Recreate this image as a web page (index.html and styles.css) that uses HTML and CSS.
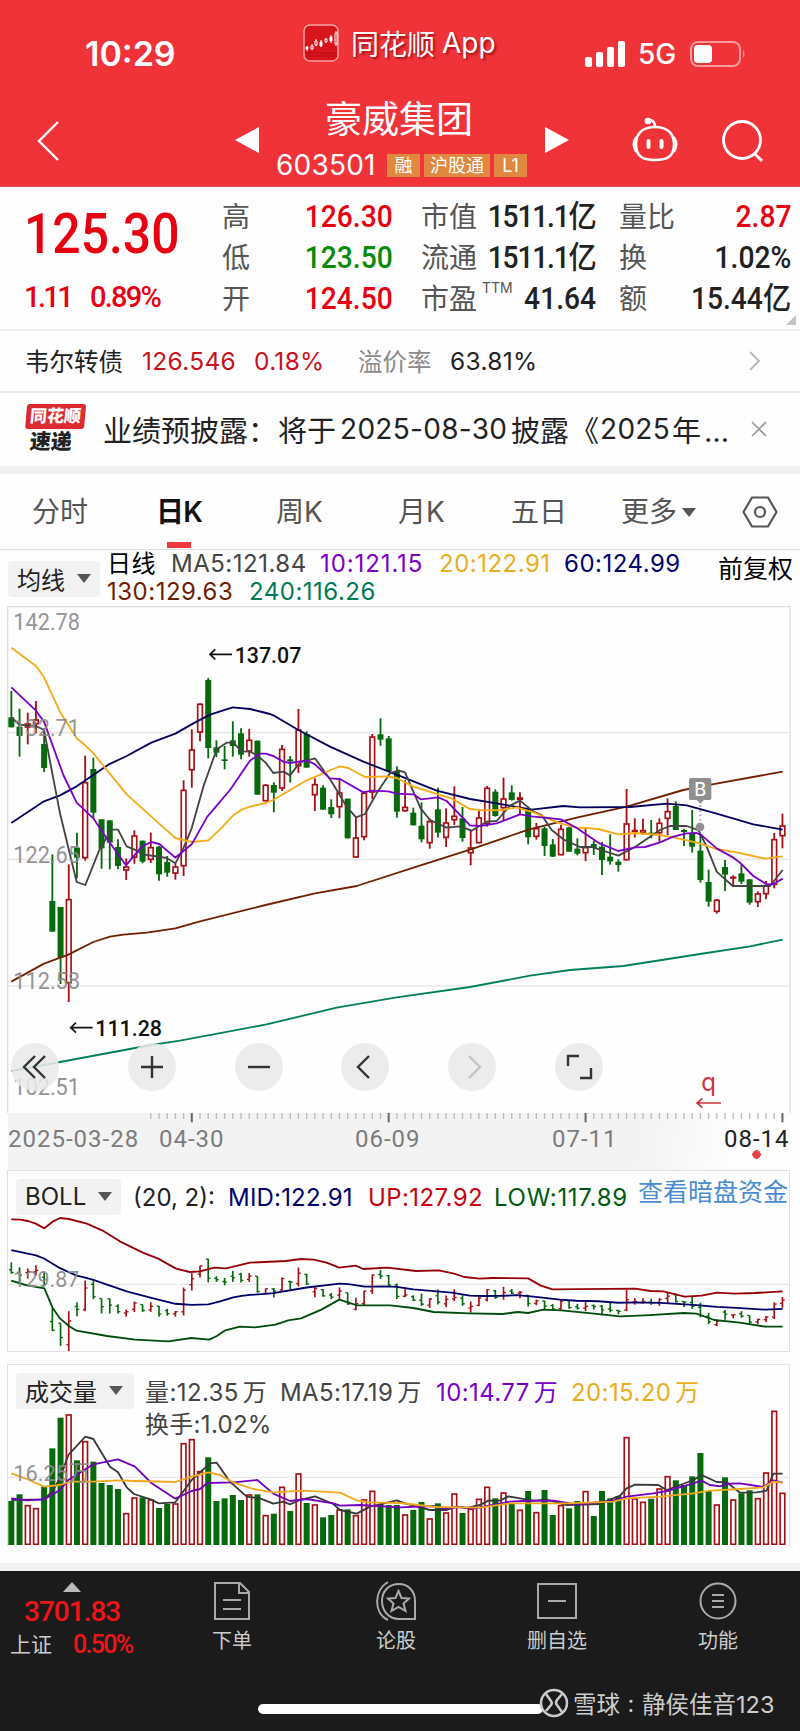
FILE: index.html
```html
<!DOCTYPE html>
<html lang="zh-CN">
<head>
    <meta charset="UTF-8">
    <meta name="viewport" content="width=device-width, initial-scale=1.0">
    <title>豪威集团 603501</title>
    <link rel="stylesheet" href="styles.css">
</head>
<body>
    <header class="header">
        <div class="status-bar">
            <span class="time">10:29</span>
            <div class="app-name">
                <svg class="app-icon" viewBox="0 0 36 38">
                    <rect x="1" y="1" width="34" height="36" rx="6" fill="#d8151c" stroke="#f9a0a0" stroke-width="1.5"/>
                    <path d="M2 29h32M2 32h32" stroke="#b90d14"/>
                    <g fill="#fff" stroke="#fff">
                        <path d="M4 22v5M9 20v6M13 15v7M18 16v7M23 14v5M28 11v8M33 7v15"/>
                        <path d="M3 23h2v2H3zM17 18h2v4h-2zM27 13h2v4h-2z"/>
                        <path d="M8 22h2v3H8zM12 17h2v4h-2zM22 15h2v3h-2zM32 9h2v11h-2z" fill="#d8151c"/>
                    </g>
                </svg>
                <span class="app-cn">同花顺</span><span class="app-en">App</span>
            </div>
            <div class="signal">
                <i class="bar b1"></i><i class="bar b2"></i><i class="bar b3"></i><i class="bar b4"></i>
            </div>
            <span class="network">5G</span>
            <svg class="battery" viewBox="0 0 56 26">
                <rect x="1" y="1" width="49" height="24" rx="7" fill="none" stroke="#f99a9d" stroke-width="2"/>
                <rect x="4" y="4" width="18" height="18" rx="4" fill="#fff"/>
                <path d="M53 9q3 4 0 8z" fill="#f99a9d"/>
            </svg>
        </div>
        <div class="title-bar">
            <svg class="back" viewBox="0 0 24 42"><path d="M22 2 3 21l19 19" fill="none" stroke="#fff" stroke-width="2.4"/></svg>
            <svg class="prev" viewBox="0 0 24 26"><path d="M24 0v26L0 13z" fill="#fff"/></svg>
            <div class="stock">
                <h1 class="stock-name">豪威集团</h1>
                <div class="stock-info">
                    <span class="stock-code">603501</span>
                    <span class="tag">融</span>
                    <span class="tag wide">沪股通</span>
                    <span class="tag">L1</span>
                </div>
            </div>
            <svg class="next" viewBox="0 0 24 26"><path d="M0 0v26l24-13z" fill="#fff"/></svg>
            <svg class="robot" viewBox="0 0 48 46" fill="none" stroke="#fff" stroke-width="2.6" stroke-linecap="round">
                <path d="M24 10q0-7-6-7h-3"/>
                <circle cx="17" cy="4" r="2" fill="#fff"/>
                <path d="M24 10c-12 0-19 6-19 17 0 12 6 16 19 16s19-4 19-16c0-11-7-17-19-17z"/>
                <path d="M5 21q-4 6 0 13M43 21q4 6 0 13" stroke-width="3"/>
                <path d="M17.500 24v6M30.500 24v6" stroke-width="4"/>
            </svg>
            <svg class="search" viewBox="0 0 42 42" fill="none" stroke="#fff" stroke-width="2.8">
                <circle cx="20" cy="20" r="18.500"/><path d="m32 33 8 8"/>
            </svg>
        </div>
    </header>

    <section class="quote">
        <div class="price-box">
            <div class="price">125.30</div>
            <div class="change"><span>1.11</span><span>0.89%</span></div>
        </div>
        <dl class="stats col-a">
            <dt>高</dt><dd class="up">126.30</dd>
            <dt>低</dt><dd class="down">123.50</dd>
            <dt>开</dt><dd class="up">124.50</dd>
        </dl>
        <dl class="stats col-b">
            <dt>市值</dt><dd class="tight">1511.1亿</dd>
            <dt>流通</dt><dd class="tight">1511.1亿</dd>
            <dt>市盈<sup>TTM</sup></dt><dd>41.64</dd>
        </dl>
        <dl class="stats col-c">
            <dt>量比</dt><dd class="up">2.87</dd>
            <dt>换</dt><dd>1.02%</dd>
            <dt>额</dt><dd>15.44亿</dd>
        </dl>
        <i class="corner"></i>
    </section>

    <section class="bond">
        <span class="bond-name">韦尔转债</span>
        <span class="bond-price">126.546</span>
        <span class="bond-rate">0.18%</span>
        <span class="bond-label">溢价率</span>
        <span class="bond-premium">63.81%</span>
        <svg class="bond-arrow" viewBox="0 0 12 20"><path d="m1 1 9 9-9 9" fill="none" stroke="#bbb" stroke-width="2"/></svg>
    </section>

    <section class="news">
        <div class="news-logo">
            <span class="logo-top">同花顺</span>
            <span class="logo-bottom">速递</span>
        </div>
        <p class="news-text"><span class="n0">业绩预披露：</span><span class="n1">将于</span><span class="n2">2025-08-30</span><span class="n3">披露</span><span class="n4">《</span><span class="n5">2025</span><span class="n6">年…</span></p>
        <svg class="close" viewBox="0 0 16 16"><path d="m1 1 14 14M15 1 1 15" stroke="#999" stroke-width="1.600"/></svg>
    </section>

    <nav class="tabs">
        <span class="tab">分时</span>
        <span class="tab active">日K</span>
        <span class="tab">周K</span>
        <span class="tab">月K</span>
        <span class="tab">五日</span>
        <span class="tab">更多<i class="caret"></i></span>
        <svg class="settings" viewBox="0 0 36 32" fill="none" stroke="#555" stroke-width="2.200"><path d="M10 1.500h16L34.500 16 26 30.500H10L1.500 16z"/><circle cx="18" cy="16" r="5"/></svg>
    </nav>

    <section class="ma-row">
        <span class="select">均线<i class="caret"></i></span>
        <div class="ma-values">
            <div class="ma-line">
                <span class="w1">日线</span><span class="w2">MA5:121.84</span><span class="w3 purple">10:121.15</span><span class="w4 yellow">20:122.91</span><span class="w5 navy">60:124.99</span>
            </div>
            <div class="ma-line">
                <span class="w6 brown">130:129.63</span><span class="teal">240:116.26</span>
            </div>
        </div>
        <span class="adjust">前复权</span>
    </section>

    <section class="chart">
        <svg id="kline" viewBox="0 18 2400 1521"></svg>
        <div class="controls">
            <button class="round"><svg viewBox="0 0 48 48"><path d="M24 13 13 24l11 11M34 13 23 24l11 11"/></svg></button>
            <button class="round"><svg viewBox="0 0 48 48"><path d="M24 13v22M13 24h22"/></svg></button>
            <button class="round"><svg viewBox="0 0 48 48"><path d="M13 24h22"/></svg></button>
            <button class="round"><svg viewBox="0 0 48 48"><path d="M28 13 17 24l11 11"/></svg></button>
            <button class="round disabled"><svg viewBox="0 0 48 48"><path d="m21 13 11 11-11 11"/></svg></button>
            <button class="round"><svg viewBox="0 0 48 48"><path d="M13 23V13h11M25 35h11V25"/></svg></button>
        </div>
    </section>

    <section class="axis">
        <svg id="ticks" viewBox="0 0 2400 36"></svg>
        <div class="dates">
            <span>2025-03-28</span><span>04-30</span><span>06-09</span><span>07-11</span><span class="last">08-14</span>
        </div>
    </section>

    <section class="panel boll">
        <div class="panel-head">
            <span class="select">BOLL<i class="caret"></i></span>
            <span class="p1">(20, 2):</span><span class="p2 navy">MID:122.91</span><span class="p3 red">UP:127.92</span><span class="p4 green">LOW:117.89</span><a class="link">查看暗盘资金</a>
        </div>
        <svg id="boll" viewBox="24 357 2346 411"></svg>
    </section>

    <section class="panel volume">
        <div class="panel-head">
            <span class="select">成交量<i class="caret"></i></span>
            <span class="v1">量:12.35<b>万</b></span><span class="v2">MA5:17.19<b>万</b></span><span class="v3 purple">10:14.77<b>万</b></span><span class="v4 yellow">20:15.20<b>万</b></span>
        </div>
        <div class="turnover">换手:1.02%</div>
        <svg id="volume" viewBox="24 165 2346 405"></svg>
    </section>

    <footer class="footer">
        <div class="index">
            <i class="tri"></i>
            <div class="index-value">3701.83</div>
            <div class="index-row"><span>上证</span><span class="index-rate">0.50%</span></div>
        </div>
        <div class="menu m1">
            <svg viewBox="0 0 42 40"><path d="M4 2h25l9 9v27H4zM28 2v10h10M12 19h18M12 28h18"/></svg>
            <span>下单</span>
        </div>
        <div class="menu m2">
            <svg viewBox="0 0 42 40"><path d="M24 3c-10 0-17 7-17 17s7 18 17 18h16V20C40 10 33 3 24 3zM13 1C-1 9-2 32 13 39"/><path d="m23.500 10 3 7 7.500.500-5.500 5 2 7.500-7-4-7 4 2-7.500-5.500-5 7.500-.5z"/></svg>
            <span>论股</span>
        </div>
        <div class="menu m3">
            <svg viewBox="0 0 42 40"><path d="M2 3h38v34H2zM12 20h18"/></svg>
            <span>删自选</span>
        </div>
        <div class="menu m4">
            <svg viewBox="0 0 42 40"><circle cx="21" cy="20" r="17.500"/><path d="M15 14h12M15 20h12M15 26h12"/></svg>
            <span>功能</span>
        </div>
        <div class="home-bar"></div>
        <div class="watermark">
            <svg viewBox="0 0 30 30" fill="none" stroke="#ccc" stroke-width="2.500"><circle cx="15" cy="15" r="13"/><path d="M7 6l5 7q1.500 2 0 4l-5 6M23 6l-5 6q-2 3 0 5l5 7"/></svg>
            <span>雪球</span><span class="colon">:</span><span>静侯佳音123</span>
        </div>
    </footer>
    <script src="chart.js"></script>
</body>
</html>
```
FILE: styles.css
```css
:root {
    --red: #f03239;
    --up: #e60012;
    --down: #0a8a0a;
    --line: #e2e2e2;
    --purple: #7a00c8;
    --yellow: #e8ae20;
    --navy: #000070;
}

* {
    margin: 0;
    padding: 0;
    box-sizing: border-box;
}

body {
    width: 800px;
    font-family: Inter, "Noto Sans CJK SC", sans-serif;
    background: #fefefe;
    color: #222;
    overflow-x: hidden;
}

svg {
    display: block;
    flex: none;
}

span, dt, dd, p {
    white-space: nowrap;
    flex: none;
}

/* header */
.header {
    height: 187px;
    background: var(--red);
    color: #fff;
    border-bottom: 1px solid #d84a4e;
}

.status-bar {
    display: flex;
    align-items: center;
    height: 95px;
    padding: 12px 0 0 85px;
}

.time {
    width: 218px;
    font-size: 34px;
    font-weight: 600;
}

.app-name {
    display: flex;
    align-items: center;
    width: 282px;
    margin-top: -22px;
    text-shadow: 2px 2px 2px rgba(120, 0, 0, 0.6);
}

.app-icon {
    width: 36px;
    height: 38px;
}

.app-cn {
    margin-left: 12px;
    font-size: 28px;
}

.app-en {
    margin-left: 7px;
    font-size: 28px;
}

.signal {
    display: flex;
    align-items: flex-end;
    gap: 4px;
    width: 53px;
    height: 26px;
}

.bar {
    width: 7px;
    border-radius: 2px;
    background: #fff;
}

.b1 { height: 10px; }
.b2 { height: 15px; }
.b3 { height: 20px; }
.b4 { height: 26px; }

.network {
    width: 52px;
    font-size: 28px;
    font-weight: 500;
}

.battery {
    width: 56px;
    height: 26px;
}

.title-bar {
    display: flex;
    height: 91px;
    padding-left: 36px;
}

.back {
    width: 24px;
    height: 42px;
    margin-top: 25px;
}

.prev {
    width: 24px;
    height: 26px;
    margin: 32px 0 0 175px;
}

.stock {
    width: 268px;
    margin-left: 17px;
}

.stock-name {
    height: 53px;
    padding-left: 49px;
    font-size: 37px;
    font-weight: 400;
    line-height: 50px;
}

.stock-info {
    display: flex;
    align-items: center;
    gap: 4px;
    height: 34px;
}

.stock-code {
    width: 107px;
    font-size: 28px;
    letter-spacing: 0.2px;
}

.tag {
    width: 33px;
    height: 23px;
    background: #e0883f;
    font-size: 18px;
    line-height: 23px;
    text-align: center;
}

.tag.wide {
    width: 66px;
}

.next {
    width: 24px;
    height: 26px;
    margin: 32px 0 0 1px;
}

.robot {
    width: 48px;
    height: 46px;
    margin: 22px 0 0 62px;
}

.search {
    width: 42px;
    height: 42px;
    margin: 25px 0 0 43px;
}

/* quote */
.quote {
    position: relative;
    display: flex;
    height: 144px;
    padding: 9px 0 0 24px;
    border-bottom: 2px solid #f0f0f0;
}

.price-box {
    flex: none;
    width: 198px;
    font-family: Roboto, sans-serif;
    color: var(--up);
}

.price {
    width: 172px;
    height: 76px;
    font-size: 56px;
    font-weight: 500;
    line-height: 76px;
    transform: scaleX(0.89);
    transform-origin: left;
}

.change {
    display: flex;
    gap: 19px;
    font-size: 29px;
    font-weight: 500;
    line-height: 50px;
    letter-spacing: -1.8px;
}

.change span:first-child {
    letter-spacing: -2.6px;
}

.stats {
    display: grid;
    flex: none;
    grid-template-columns: 56px 1fr;
    grid-auto-rows: 41px;
    align-items: center;
}

.col-a { width: 171px; }
.col-b { width: 171px; margin-left: 28px; }
.col-c { width: 172px; margin-left: 27px; }

.stats dt {
    width: 56px;
    padding-top: 2px;
    font-size: 28px;
    color: #555;
    line-height: 41px;
}

.stats sup {
    display: inline-block;
    margin-left: 5px;
    font-size: 14px;
    line-height: 10px;
    vertical-align: 16px;
}

.stats dd {
    justify-self: end;
    font-family: Roboto, "Noto Sans CJK SC", sans-serif;
    font-size: 31px;
    font-weight: 500;
    transform: scaleX(0.91);
    transform-origin: right;
    line-height: 41px;
}

.stats .tight {
    letter-spacing: -1.3px;
}

.stats .up { color: var(--up); }
.stats .down { color: var(--down); }

.corner {
    position: absolute;
    right: 4px;
    bottom: 4px;
    border-left: 10px solid transparent;
    border-bottom: 10px solid #c4c4c4;
}

/* bond */
.bond {
    display: flex;
    align-items: center;
    height: 62px;
    padding: 0 0 1px 25px;
    border-bottom: 2px solid #e8e8e8;
    font-size: 24.5px;
}

.bond-name { width: 117px; }
.bond-price { width: 112px; color: #c8101c; letter-spacing: 0.3px; }
.bond-rate { width: 104px; color: #c8101c; letter-spacing: 0.3px; }
.bond-label { width: 92px; color: #8a8a8a; }
.bond-premium { width: 299px; letter-spacing: 0.3px; }

.bond-arrow {
    width: 12px;
    height: 20px;
}

/* news */
.news {
    display: flex;
    align-items: center;
    height: 73px;
    padding: 0 0 2px 25px;
}

.news-logo {
    width: 78px;
    font-weight: 900;
    transform: skewX(-5deg);
}

.logo-top {
    display: block;
    width: 59px;
    height: 25px;
    border-radius: 3px;
    background: #dd2a30;
    color: #fff;
    font-size: 17px;
    line-height: 25px;
    text-align: center;
}

.logo-bottom {
    display: block;
    padding-left: 6px;
    font-size: 21px;
    line-height: 25px;
}

.news-text {
    display: flex;
    align-items: center;
    width: 648px;
    font-size: 29px;
}

.n0 { width: 175px; }
.n1 { width: 62px; }
.n2 { width: 171px; font-size: 28px; letter-spacing: 0.3px; }
.n3 { width: 59px; }
.n4 { width: 30px; }
.n5 { width: 72px; font-size: 28px; letter-spacing: 0.3px; }
.n6 { letter-spacing: 3px; }

.close {
    width: 16px;
    height: 16px;
}

/* tabs */
.tabs {
    display: grid;
    grid-template-columns: 124px 120px 122px 113px 110px 121px 40px;
    align-items: center;
    height: 84px;
    padding-left: 32px;
    border-top: 8px solid #f2f2f2;
    border-bottom: 1px solid var(--line);
}

.tab {
    height: 75px;
    color: #555;
    font-size: 28px;
    line-height: 76px;
}

.tab.active {
    color: #111;
    font-weight: 600;
    letter-spacing: -0.8px;
    background: linear-gradient(#ee3a3c, #ee3a3c) no-repeat 11px 68px / 24px 6px;
}

.tab .caret {
    margin-left: 5px;
    vertical-align: 5px;
}

.caret {
    display: inline-block;
    border: 7px solid transparent;
    border-top: 9px solid #555;
    border-bottom: 0;
}

.settings {
    width: 36px;
    height: 32px;
}

/* moving averages */
.ma-row {
    display: flex;
    height: 56px;
    padding-left: 8px;
}

.select {
    display: flex;
    align-items: center;
    gap: 12px;
    height: 36px;
    padding: 0 0 2px 9px;
    border-radius: 4px;
    background: #f2f2f2;
    font-size: 24px;
}

.ma-row .select {
    width: 92px;
    margin-top: 11px;
}

.ma-values {
    flex: none;
    width: 618px;
    padding-left: 7px;
}

.ma-line {
    display: flex;
    font-size: 24px;
    line-height: 28px;
    letter-spacing: 0.5px;
}

.w1 { width: 64px; color: #000; }
.w2 { width: 149px; color: #444; }
.w3 { width: 119px; letter-spacing: 0.9px; }
.w4 { width: 125px; }
.w6 { width: 142px; }

.adjust {
    font-size: 25px;
    line-height: 38px;
    color: #000;
}

.purple { color: var(--purple); }
.yellow { color: var(--yellow); }
.navy { color: var(--navy); }
.brown { color: #6c1e00; }
.teal { color: #007a56; }
.red { color: #c8000e; }
.green { color: #005a10; }

/* k-line chart */
.chart {
    position: relative;
    height: 507px;
}

.chart svg {
    width: 100%;
}

.controls {
    position: absolute;
    left: 11px;
    top: 437px;
    display: flex;
    gap: 58.8px;
}

.round {
    width: 48px;
    height: 48px;
    border: 0;
    border-radius: 50%;
    background: rgba(233, 233, 233, 0.88);
}

.round:first-child {
    margin-right: 10px;
}

.round path {
    fill: none;
    stroke: #333;
    stroke-width: 2.4;
}

.round.disabled path {
    stroke: #c4c4c4;
}

/* date axis */
.axis {
    height: 57px;
    margin: 0 10px 0 8px;
    background: linear-gradient(100deg, #f3f3f3 80%, #fdfdfd 92%);
}

#ticks {
    width: 800px;
    height: 12px;
    margin-left: -8px;
}

.dates {
    display: grid;
    grid-template-columns: 151px 196px 197px 172px auto;
    font-family: Roboto, sans-serif;
    font-size: 24px;
    line-height: 29px;
    color: #7c7c7c;
    letter-spacing: 1px;
}

.dates .last {
    color: #222;
    background: radial-gradient(circle, #e8434a 4px, transparent 4.5px) no-repeat 27px 24px / 11px 11px;
    height: 45px;
}

/* indicator panels */
.panel {
    width: 783px;
    margin-left: 7px;
    border: 1px solid var(--line);
}

.panel svg {
    width: 782px;
}

.panel-head {
    display: flex;
    align-items: center;
    height: 36px;
    margin: 8px 0 0 8px;
    font-size: 24px;
}

.panel .caret {
    border-width: 9px 7px 0;
}

.boll {
    height: 182px;
    overflow: hidden;
}

.boll .select { width: 105px; }
.p1 { width: 95px; margin-left: 12px; }
.p2 { width: 140px; letter-spacing: 0.2px; }
.p3 { width: 126px; letter-spacing: 0.4px; }
.p4 { width: 144px; letter-spacing: 0.7px; }

.link {
    font-size: 25px;
    line-height: 30px;
    margin-top: -10px;
    color: #4a8cd0;
    white-space: nowrap;
}

.volume {
    height: 182px;
    margin-top: 12px;
    border-bottom: 0;
}

.volume .select { width: 118px; }
.volume b { font-weight: 400; margin-left: 4px; }
.v1 { width: 135px; margin-left: 11px; color: #444; }
.v2 { width: 156px; color: #444; }
.v3 { width: 135px; }

.v1, .v2, .v3, .v4 {
    padding-bottom: 2px;
    letter-spacing: 0.4px;
}

.turnover {
    height: 30px;
    padding-left: 137px;
    font-size: 24px;
    line-height: 31px;
    letter-spacing: 0.3px;
    color: #444;
}

#volume {
    margin-top: -29px;
}

/* footer */
.footer {
    position: relative;
    display: flex;
    height: 168px;
    margin-top: 17px;
    border-top: 8px solid #f2f2f2;
    background: #1b1b1b;
    color: #ccc;
}

.index {
    flex: none;
    width: 192px;
    padding: 11px 0 0 10px;
    font-family: Roboto, "Noto Sans CJK SC", sans-serif;
}

.tri {
    display: block;
    width: 18px;
    margin-left: 53px;
    border: 9px solid transparent;
    border-top: 0;
    border-bottom: 10px solid #bbb;
}

.index-value {
    padding-left: 14px;
    color: #f01418;
    font-size: 28px;
    font-weight: 500;
    line-height: 40px;
    letter-spacing: -1px;
}

.index-row {
    display: flex;
    gap: 21px;
    font-size: 21px;
    line-height: 26px;
}

.index-rate {
    color: #f01418;
    font-size: 25px;
    font-weight: 500;
    letter-spacing: -1.7px;
}

.menu {
    display: flex;
    flex: none;
    flex-direction: column;
    align-items: center;
    width: 80px;
    padding-top: 10px;
    font-size: 20px;
}

.menu svg {
    width: 42px;
    height: 40px;
    fill: none;
    stroke: #aaa;
    stroke-width: 2;
}

.menu span {
    margin-top: 6px;
    line-height: 28px;
}

.m2 { margin-left: 84px; }
.m3 { margin-left: 81px; }
.m4 { margin-left: 81px; }

.home-bar {
    position: absolute;
    left: 258px;
    top: 133px;
    width: 285px;
    height: 10px;
    border-radius: 5px;
    background: #fff;
}

.watermark {
    position: absolute;
    left: 539px;
    top: 115px;
    display: flex;
    align-items: center;
    height: 34px;
    font-size: 23.5px;
}

.watermark svg {
    width: 30px;
    height: 30px;
    margin-right: 4px;
}

.colon {
    width: 22px;
    text-align: center;
}
```
FILE: chart.js
```js
// all coordinates are in chart units, 3 units = 1px
var STEP = 24.61;
var X0 = 34;
var RED = '#a80f14';
var GREEN = '#066a0c';

// direction, high, body top, body bottom, low
var candles = `g 273 352 382 382,g 326 380 408 470,r 338 370 383 433,r 303 358 373 400,g 385 432 504 516
g 763 903 995 995,g 921 921 1073 1152,r 793 897 1150 1206,g 698 743 773 835,r 467 546 775 782
g 473 507 638 655,g 658 658 745 806,g 661 661 728 808,g 718 741 798 808,r 775 799 812 840
r 691 706 773 791,g 722 722 785 790,r 698 741 780 789,g 737 740 823 842,g 768 786 818 830
r 790 799 821 839,r 541 569 799 828,r 388 448 511 563,r 310 311 398 424,g 234 240 444 475
g 421 442 458 471,g 438 478 483 508,g 364 421 438 470,g 385 400 464 478,r 387 419 455 470
g 422 422 584 584,r 552 554 604 604,g 547 555 578 637,r 435 446 566 573,g 468 478 484 548
r 327 388 499 519,g 394 402 503 503,r 535 552 586 633,g 556 563 629 629,g 598 621 643 654
r 540 577 622 655,g 596 596 715 715,r 650 712 773 773,r 575 578 712 721,r 402 409 578 597
g 355 403 419 437,g 408 415 513 513,g 499 513 635 653,r 540 620 634 635,g 623 638 676 676
g 607 677 718 727,r 655 663 730 746,g 563 628 698 712,r 625 667 714 741,r 559 647 661 675
g 621 655 714 725,r 690 742 760 796,r 633 652 730 730,r 558 563 672 680,g 568 575 648 650
r 533 595 625 660,g 556 577 600 602,r 577 592 600 645,g 620 625 712 733,r 669 684 711 719
g 680 685 738 768,g 717 733 770 771,r 674 686 766 766,g 680 682 755 755,g 715 746 761 766
r 682 741 760 783,g 722 732 744 765,g 726 740 780 825,g 703 770 784 794,g 778 785 795 815
r 567 670 781 781,r 655 690 695 713,r 656 690 700 704,g 660 698 705 715,r 655 668 700 725
r 595 633 657 705,g 604 618 690 690,g 686 690 696 738,g 630 700 740 758,g 703 752 840 848
g 809 846 905 920,r 897 899 936 941,g 780 801 824 873,r 826 830 834 857,g 793 820 845 852
g 838 838 908 914,r 874 880 907 921,r 843 855 883 898,r 699 717 855 865,r 641 676 709 745`
    .split(/[,\n]/).map(function (row) {
        var p = row.trim().split(' ');
        return { color: p[0] === 'r' ? RED : GREEN, up: p[0] === 'r', high: +p[1], top: +p[2], bottom: +p[3], low: +p[4] };
    });

var volumes = [438, 418, 450, 459, 395, 280, 188, 178, 316, 258, 320, 384, 390, 402, 474, 427, 427, 433, 459, 447,
    445, 264, 252, 348, 307, 438, 430, 420, 435, 418, 418, 480, 476, 395, 468, 355, 444, 448, 487, 480,
    463, 463, 480, 433, 407, 447, 450, 450, 478, 465, 441, 490, 445, 472, 415, 474, 461, 431, 395, 430,
    412, 447, 464, 408, 471, 405, 480, 450, 460, 438, 408, 483, 408, 430, 423, 246, 430, 440, 431, 400,
    363, 376, 390, 364, 294, 408, 448, 367, 433, 415, 406, 429, 352, 167, 413];

var ma = {
    ma5: '34,352 58,374 108,378 132,390 180,640 230,846 256,855 300,745 335,689 354,689 380,739 402,748 430,763 500,774 526,790 550,745 575,685 610,560 650,448 680,428 700,428 725,454 750,455 770,465 797,488 820,519 850,515 870,526 900,487 945,475 995,545 1040,620 1068,652 1095,642 1130,580 1170,520 1195,511 1215,517 1262,625 1290,660 1340,683 1380,679 1415,692 1460,665 1490,663 1530,617 1560,602 1600,635 1625,645 1655,690 1690,718 1740,741 1775,741 1855,767 1905,741 1980,690 2010,678 2060,678 2095,690 2120,740 2150,815 2198,858 2270,858 2310,858 2348,810',
    ma10: '34,262 108,332 132,365 190,525 230,608 280,655 325,722 378,796 425,740 454,726 478,732 526,773 575,733 622,650 690,570 750,482 780,461 797,461 820,468 850,485 870,489 920,481 945,493 990,535 1020,537 1090,577 1115,572 1165,574 1190,581 1240,583 1262,598 1315,592 1340,603 1410,676 1440,678 1490,670 1560,643 1595,649 1683,658 1730,684 1800,731 1855,753 1905,742 1935,741 1980,727 2020,710 2060,700 2090,699 2105,706 2150,745 2200,773 2220,788 2260,828 2300,853 2320,852 2348,836',
    ma20: '34,143 108,198 132,232 180,335 230,415 256,436 280,460 380,583 454,650 526,714 575,726 625,721 660,688 700,646 725,629 750,620 797,609 820,600 920,541 1000,507 1020,499 1045,504 1095,531 1160,529 1190,534 1240,560 1355,596 1410,627 1450,631 1505,630 1550,622 1600,637 1680,670 1730,682 1795,687 1855,703 1905,699 1980,705 2020,712 2090,728 2150,747 2210,757 2295,776 2348,769',
    ma60: '34,669 132,604 180,586 230,559 325,494 380,468 454,428 526,401 580,370 630,344 698,322 750,327 810,342 820,346 895,390 990,440 1090,485 1190,524 1310,572 1410,597 1490,610 1595,629 1690,618 1740,622 1890,621 2000,611 2060,616 2150,641 2260,673 2348,689',
    ma130: '34,1145 132,1091 205,1064 280,1026 330,1010 370,1004 440,998 526,985 600,964 797,915 945,880 1070,858 1250,800 1410,749 1585,689 1730,653 1880,620 2050,570 2120,556 2348,515',
    ma240: '34,1413 180,1386 454,1335 540,1322 800,1273 1010,1223 1190,1192 1410,1161 1590,1127 1710,1110 1870,1098 2100,1062 2250,1039 2348,1019'
};

// upper and lower bands are sampled on a 1568 wide grid
var bands = {
    up: '22,370 40,371 55,375 70,383 87,397 103,377 118,366 135,369 170,383 200,403 235,436 280,470 310,488 345,518 372,528 392,526 420,515 443,517 490,500 560,495 590,489 615,491 640,500 665,515 697,509 712,519 760,515 815,525 860,523 890,533 910,543 940,548 965,546 1035,547 1060,569 1083,580 1245,578 1275,585 1300,586 1342,602 1375,599 1405,590 1440,593 1480,591 1534,586',
    low: '22,554 50,567 87,577 103,635 118,668 135,690 150,704 210,720 265,731 330,736 375,726 410,731 425,720 440,704 470,692 500,694 540,686 565,673 590,667 630,641 665,611 700,628 765,628 810,636 850,648 920,652 985,654 1015,648 1035,651 1065,641 1100,643 1160,652 1215,661 1265,658 1340,651 1365,653 1400,672 1450,680 1500,692 1534,692'
};

var volMa = {
    ma5: '34,435 132,433 156,410 180,370 205,300 256,245 280,252 330,335 354,352 380,397 402,417 454,434 476,445 526,442 575,375 630,325 650,323 690,380 740,425 780,430 820,446 850,440 870,448 900,435 945,424 1000,447 1020,465 1070,476 1110,455 1190,436 1215,445 1290,465 1340,465 1370,455 1400,459 1440,450 1465,437 1500,437 1525,424 1600,437 1640,434 1700,450 1800,447 1860,422 1880,400 1905,389 1975,390 2000,405 2080,375 2105,360 2150,381 2180,382 2220,413 2270,412 2300,407 2320,356 2348,356',
    ma10: '34,430 80,436 132,433 180,405 205,375 280,328 354,313 405,335 454,384 526,431 575,408 600,402 622,384 700,382 772,375 820,416 870,438 920,432 1000,445 1020,452 1080,450 1200,457 1300,453 1330,461 1380,456 1420,461 1530,440 1570,438 1660,437 1730,448 1840,437 1880,425 1960,415 2000,408 2070,388 2105,377 2130,390 2160,394 2180,386 2220,385 2290,396 2320,376 2348,383',
    ma20: '34,355 80,372 132,395 180,390 210,380 280,380 354,376 405,378 526,381 575,365 625,352 660,360 700,382 760,402 820,412 910,407 1020,413 1070,436 1110,442 1200,444 1310,456 1440,458 1530,445 1700,445 1840,440 1880,430 1980,425 2080,415 2130,407 2220,402 2290,397 2320,380 2348,383'
};

function x(i) {
    return X0 + i * STEP;
}

function line(x1, y1, x2, y2, color, width) {
    return '<line x1="' + x1 + '" y1="' + y1 + '" x2="' + x2 + '" y2="' + y2 + '" stroke="' + color + '" stroke-width="' + width + '"/>';
}

function curve(points, color) {
    return '<polyline points="' + points + '" fill="none" stroke="' + color + '" stroke-width="5.5" stroke-linejoin="round"/>';
}

function box(cx, top, bottom, c) {
    var h = Math.max(bottom - top, 4);
    if (!c.up) {
        return '<rect x="' + (cx - 9) + '" y="' + top + '" width="18" height="' + h + '" fill="' + c.color + '"/>';
    }
    return '<rect x="' + (cx - 7) + '" y="' + (top + 2) + '" width="14" height="' + Math.max(h - 4, 2) + '" fill="#fff" stroke="' + c.color + '" stroke-width="5"/>';
}

function text(tx, ty, str, size, color, len, weight, font) {
    return '<text x="' + tx + '" y="' + ty + '" font-size="' + size + '" fill="' + color + '" textLength="' + len +
        '" lengthAdjust="spacingAndGlyphs" font-weight="' + (weight || 400) + '" font-family="' + (font || 'Roboto') + ', Noto Sans CJK SC">' + str + '</text>';
}

function map(points, fx, fy) {
    return points.split(' ').map(function (p) {
        var xy = p.split(',');
        return fx(+xy[0]) + ',' + fy(+xy[1]);
    }).join(' ');
}

function same(v) { return v; }
function bollY(v) { return 488 + (v - 234) * 0.282; }

function drawKline() {
    var s = '<path d="M23 1539V20H2370V1539" fill="none" stroke="#ddd" stroke-width="4"/>';
    [398, 778, 1158].forEach(function (y) { s += line(24, y, 2368, y, '#e8e8e8', 5); });
    candles.forEach(function (c, i) {
        s += line(x(i), c.high, x(i), c.low, c.color, 5.5) + box(x(i), c.top, c.bottom, c);
    });
    s += curve(ma.ma130, '#702000') + curve(ma.ma240, '#007f5c') + curve(ma.ma60, '#05005e');
    s += curve(ma.ma5, '#444') + curve(ma.ma20, '#f5aa18') + curve(ma.ma10, '#7d00c6');
    [['142.78', 90], ['132.71', 409], ['122.65', 788], ['112.58', 1167], ['102.51', 1485]].forEach(function (l) {
        s += '<g opacity="0.9">' + text(40, l[1], l[0], 70, '#8a8a8a', 200) + '</g>';
    });
    // extreme price marks
    s += '<path d="M696 163h-66m16-15-16 15 16 15M278 1283h-66m16-15-16 15 16 15" fill="none" stroke="#111" stroke-width="5"/>';
    s += text(704, 188, '137.07', 68, '#111', 200, 500) + text(286, 1308, '111.28', 68, '#111', 200, 500);
    // buy point
    s += '<g fill="#8f8f8f"><rect x="2067" y="534" width="67" height="66" rx="5"/><path d="M2088 598h26l-13 13z"/><circle cx="2100" cy="681" r="13"/></g>';
    s += '<path d="M2101 616v46" stroke="#999" stroke-width="6" stroke-dasharray="5 9"/>';
    s += text(2083, 588, 'B', 54, '#fff', 36, 500, 'Inter');
    s += text(2104, 1473, 'q', 76, '#d2303a', 44, 400, 'Inter');
    s += '<path d="M2163 1509h-72m16-14-16 14 16 14" fill="none" stroke="#d2303a" stroke-width="5"/>';
    document.getElementById('kline').innerHTML = s;
}

function drawTicks() {
    var s = '';
    for (var i = 17; i < 95; i++) {
        var major = (94 - i) % 24 === 0;
        s += line(x(i), 0, x(i), major ? 28 : 18, major ? '#666' : '#bbb', major ? 6 : 4);
    }
    document.getElementById('ticks').innerHTML = s;
}

function drawBoll() {
    var s = line(24, 565, 2370, 565, '#e4e4e4', 3);
    candles.forEach(function (c, i) {
        var a = bollY(c.up ? c.bottom : c.top);
        var b = bollY(c.up ? c.top : c.bottom);
        s += line(x(i), bollY(c.high), x(i), bollY(c.low) + 3, c.color, 5);
        s += line(x(i) - 7, a, x(i), a, c.color, 4) + line(x(i), b, x(i) + 7, b, c.color, 4);
    });
    var wide = function (v) { return v * 3 / 1.96; };
    s += curve(map(bands.up, wide, same), '#960006') + curve(map(bands.low, wide, same), '#004c0c');
    s += curve(map(ma.ma20, same, bollY), '#000068');
    s += '<g opacity="0.9">' + text(40, 574, '129.87', 68, '#8a8a8a', 198) + '</g>';
    document.getElementById('boll').innerHTML = s;
}

function drawVolume() {
    var s = line(24, 367, 2370, 367, '#e4e4e4', 3);
    volumes.forEach(function (v, i) {
        s += box(x(i), v, 570, candles[i]);
    });
    s += curve(volMa.ma5, '#383838') + curve(volMa.ma10, '#7200bd') + curve(volMa.ma20, '#f0a81c');
    s += '<g opacity="0.9">' + text(40, 378, '16.25万', 68, '#8a8a8a', 230) + '</g>';
    document.getElementById('volume').innerHTML = s;
}

drawKline();
drawTicks();
drawBoll();
drawVolume();
```
